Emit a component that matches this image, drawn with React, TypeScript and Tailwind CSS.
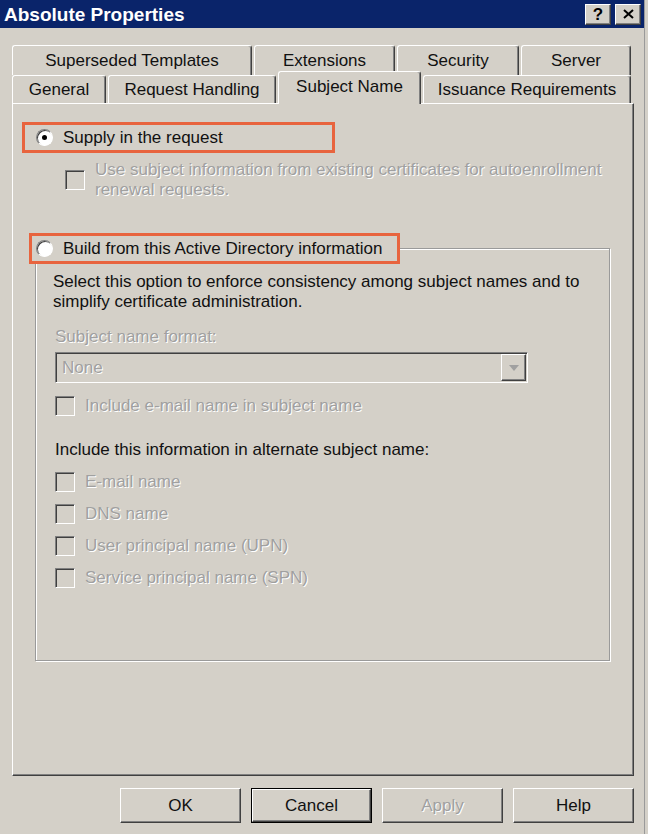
import type { ReactNode } from "react"

const raised =
  "border border-t-white border-l-white border-r-[#404040] border-b-[#404040] shadow-[inset_-1px_-1px_0_#808080]"
const sunken =
  "border border-t-[#808080] border-l-[#808080] border-r-white border-b-white shadow-[inset_1px_1px_0_#404040]"
const disabledText = "text-[#a0a0a0] [text-shadow:1px_1px_0_#ffffff]"

function TitleButton({ children }: { children: ReactNode }) {
  return (
    <div
      className={`w-[26px] h-[21px] bg-[#d4d0c8] flex items-center justify-center text-black font-bold text-[17px] leading-none ${raised}`}
    >
      {children}
    </div>
  )
}

function Tab({ label, width, selected = false }: { label: string; width: string; selected?: boolean }) {
  return (
    <div
      className={`${width} ${
        selected ? "h-[33px] mb-[-1px] z-10 pb-[3px]" : "h-full"
      } relative bg-[#d4d0c8] rounded-t-[3px] border-t border-l border-r border-t-white border-l-white border-r-[#404040] shadow-[inset_-1px_0_0_#808080] flex items-center justify-center whitespace-nowrap`}
    >
      {label}
    </div>
  )
}

function Radio({ checked = false }: { checked?: boolean }) {
  return (
    <div
      className={`w-[17px] h-[17px] shrink-0 rounded-full bg-white flex items-center justify-center ${sunken}`}
    >
      {checked && <div className="w-[5px] h-[5px] rounded-full bg-black" />}
    </div>
  )
}

function Checkbox() {
  return <div className={`w-[20px] h-[20px] shrink-0 bg-[#d4d0c8] ${sunken}`} />
}

function CheckRow({ label }: { label: string }) {
  return (
    <div className="h-[20px] flex items-center gap-[10px]">
      <Checkbox />
      <span className={disabledText}>{label}</span>
    </div>
  )
}

function Button({ label, disabled = false, isDefault = false }: { label: string; disabled?: boolean; isDefault?: boolean }) {
  const inner = (
    <div
      className={`w-full h-full bg-[#d4d0c8] flex items-center justify-center ${raised} ${
        disabled ? disabledText : "text-[#111]"
      }`}
    >
      {label}
    </div>
  )
  return (
    <div className={`w-[121px] h-[35px] ${isDefault ? "border border-black" : ""}`}>{inner}</div>
  )
}

export default function App() {
  return (
    <div className="w-[648px] h-[834px] bg-[#d4d0c8] overflow-hidden font-['Liberation_Sans',Arial,sans-serif] text-[17px] leading-[20px] text-[#111]">
      <div className="w-[645px] h-full border-r border-[#9a9a9a] flex flex-col">
        {/* title bar */}
        <div className="h-[28px] shrink-0 bg-[#0a246a] flex items-center pl-[4px] pr-[3px]">
          <span className="text-white font-bold text-[19px] leading-none">Absolute Properties</span>
          <div className="ml-auto flex gap-[4px]">
            <TitleButton>?</TitleButton>
            <TitleButton>
              <svg width="11" height="10" viewBox="0 0 11 10">
                <path d="M1 1 L10 9 M10 1 L1 9" stroke="#000" strokeWidth="2" />
              </svg>
            </TitleButton>
          </div>
        </div>

        {/* tabs */}
        <div className="pl-[12px] pt-[17px]">
          <div className="h-[30px] flex gap-[2px]">
            <Tab label="Superseded Templates" width="w-[240px]" />
            <Tab label="Extensions" width="w-[141px]" />
            <Tab label="Security" width="w-[122px]" />
            <Tab label="Server" width="w-[110px]" />
          </div>
          <div className="h-[28px] flex items-end gap-[2px]">
            <Tab label="General" width="w-[94px]" />
            <Tab label="Request Handling" width="w-[168px]" />
            <Tab label="Subject Name" width="w-[143px]" selected />
            <Tab label="Issuance Requirements" width="w-[208px]" />
          </div>
        </div>

        {/* panel */}
        <div className={`ml-[12px] w-[622px] h-[673px] shrink-0 pl-[9px] pt-[18px] ${raised}`}>
          <div className="w-[313px] h-[31px] border-[3px] border-[#e8643e] flex items-center pl-[11px] gap-[10px]">
            <Radio checked />
            <span>Supply in the request</span>
          </div>

          <div className="mt-[7px] ml-[43px] flex items-center gap-[10px]">
            <Checkbox />
            <div className={disabledText}>
              Use subject information from existing certificates for autoenrollment
              <br />
              renewal requests.
            </div>
          </div>

          {/* group box */}
          <div className="relative mt-[48px] ml-[13px] w-[575px] h-[413px] border border-[#9a9a9a] shadow-[inset_1px_1px_0_#ffffff,1px_1px_0_#ffffff] pl-[19px] pt-[23px]">
            <div className="absolute left-[-7px] top-[-16px] w-[371px] h-[31px] border-[3px] border-[#e8643e] bg-[#d4d0c8] flex items-center pl-[4px] gap-[10px]">
              <Radio />
              <span>Build from this Active Directory information</span>
            </div>

            <p className="ml-[-2px]">
              Select this option to enforce consistency among subject names and to
              <br />
              simplify certificate administration.
            </p>

            <div className={`mt-[15px] ${disabledText}`}>Subject name format:</div>

            <div className={`mt-[5px] w-[473px] h-[31px] flex items-center pl-[6px] pr-[1px] ${sunken}`}>
              <span className={disabledText}>None</span>
              <div className={`ml-auto w-[25px] h-[27px] bg-[#d4d0c8] flex items-center justify-center ${raised}`}>
                <svg width="10" height="6" viewBox="0 0 10 6">
                  <path d="M0 0 H10 L5 6 Z" fill="#a0a0a0" />
                </svg>
              </div>
            </div>

            <div className="mt-[13px]">
              <CheckRow label="Include e-mail name in subject name" />
            </div>

            <div className="mt-[24px]">Include this information in alternate subject name:</div>

            <div className="mt-[12px] flex flex-col gap-[12px]">
              <CheckRow label="E-mail name" />
              <CheckRow label="DNS name" />
              <CheckRow label="User principal name (UPN)" />
              <CheckRow label="Service principal name (SPN)" />
            </div>
          </div>
        </div>

        {/* buttons */}
        <div className="mt-[12px] pr-[10px] flex justify-end gap-[10px]">
          <Button label="OK" />
          <Button label="Cancel" isDefault />
          <Button label="Apply" disabled />
          <Button label="Help" />
        </div>
      </div>
    </div>
  )
}
